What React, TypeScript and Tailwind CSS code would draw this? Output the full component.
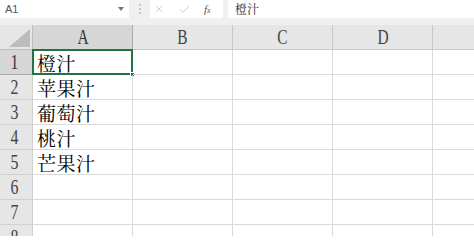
import React from 'react';
import { X, Check } from 'lucide-react';

const cols = ['A', 'B', 'C', 'D', 'E'];
const data: Record<number, string> = {
  1: '橙汁',
  2: '苹果汁',
  3: '葡萄汁',
  4: '桃汁',
  5: '芒果汁',
};
const rows = [1, 2, 3, 4, 5, 6, 7, 8];

const serif = { fontFamily: '"Liberation Serif", "Times New Roman", serif' };
const cjk = { fontFamily: '"Noto Serif CJK SC", "Noto Sans CJK SC", sans-serif' };

const App: React.FC = () => {
  return (
    <div className="w-[474px] h-[236px] overflow-hidden bg-white select-none">
      {/* Formula bar */}
      <div className="h-[25px] bg-[#f0f0f0] flex items-start">
        <div className="w-[129px] h-[18px] bg-white flex items-center justify-between pl-[5px] pr-[5px]">
          <span className="text-[11px] text-[#555]" style={{ fontFamily: '"Liberation Sans", Arial, sans-serif' }}>A1</span>
          <span className="w-0 h-0 border-l-[3px] border-r-[3px] border-t-[4px] border-l-transparent border-r-transparent border-t-[#777]" />
        </div>
        <div className="w-[21px] h-[18px] flex flex-col items-center justify-center gap-[2px]">
          <span className="w-[2px] h-[2px] bg-[#c8c8c8]" />
          <span className="w-[2px] h-[2px] bg-[#c8c8c8]" />
          <span className="w-[2px] h-[2px] bg-[#c8c8c8]" />
        </div>
        <div className="w-[73px] h-[18px] bg-white flex items-center pl-[3px] gap-[13px]">
          <X size={12} strokeWidth={1.5} className="text-[#c4c4c4]" />
          <Check size={13} strokeWidth={1.5} className="text-[#c4c4c4]" />
          <span className="text-[11px] italic text-[#555] leading-none" style={serif}>
            f<span className="text-[8px]">x</span>
          </span>
        </div>
        <div className="flex-1 ml-[5px] h-[18px] bg-white flex items-center pl-[7px]">
          <span className="text-[12px] text-[#333] leading-none" style={cjk}>橙汁</span>
        </div>
      </div>

      {/* Grid */}
      <div className="grid grid-cols-[33px_100px_100px_100px_100px_100px]">
        {/* corner */}
        <div className="h-[25px] bg-[#e6e6e6] border-r border-b border-[#bdbdbd] relative overflow-hidden">
          <svg className="absolute right-[2px] bottom-[2px]" width="21" height="18" viewBox="0 0 21 18">
            <polygon points="21,0 21,18 0,18" fill="#bcbcbc" />
          </svg>
        </div>
        {cols.map((c) => (
          <div
            key={c}
            className={`h-[25px] border-r border-b flex items-center justify-center ${
              c === 'A' ? 'bg-[#d6d6d6] text-[#333] border-[#ababab]' : 'bg-[#e6e6e6] text-[#444] border-[#c8c8c8]'
            }`}
            style={serif}
          >
            <span className="inline-block text-[22px] leading-none scale-x-[0.7]">{c === 'E' ? '' : c}</span>
          </div>
        ))}

        {rows.map((r) => (
          <React.Fragment key={r}>
            <div
              className={`h-[25px] border-r border-b flex items-center justify-center pr-[3px] ${
                r === 1 ? 'bg-[#d6d6d6] text-[#333] border-[#ababab]' : 'bg-[#e6e6e6] text-[#444] border-[#d0d0d0]'
              }`}
              style={serif}
            >
              <span className="inline-block text-[22px] leading-none scale-x-[0.72]">{r}</span>
            </div>
            {cols.map((c) => (
              <div key={c} className="h-[25px] border-r border-b border-[#dadada] relative flex items-center pl-[4px]">
                {c === 'A' && data[r] && (
                  <span className="text-[19px] leading-none text-black tracking-[0.5px]" style={cjk}>
                    {data[r]}
                  </span>
                )}
                {c === 'A' && r === 1 && (
                  <>
                    <div className="absolute -left-[1px] -top-[1px] -right-[1px] -bottom-[1px] border-2 border-[#217346]" />
                    <div className="absolute -right-[3px] -bottom-[3px] w-[5px] h-[5px] bg-[#217346] border border-white" />
                  </>
                )}
              </div>
            ))}
          </React.Fragment>
        ))}
      </div>
    </div>
  );
};

export default App;
